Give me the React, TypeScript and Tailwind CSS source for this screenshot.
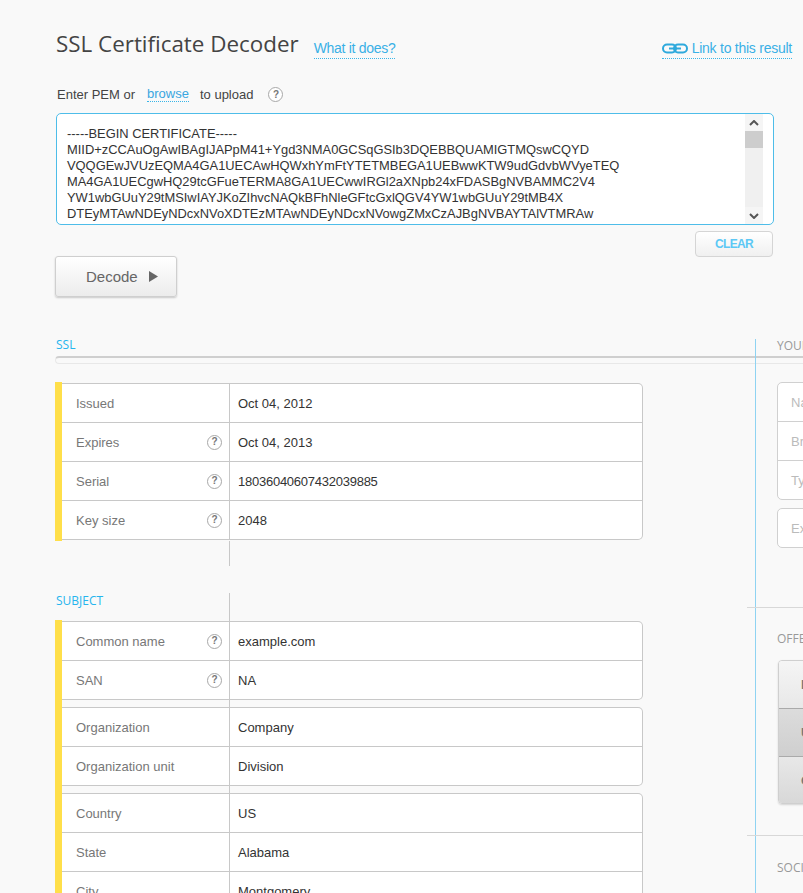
import React from "react";

const SANS = "font-['Liberation_Sans',Arial,sans-serif]";

function Help() {
  return (
    <span className="flex h-[15px] w-[15px] items-center justify-center rounded-full border border-[#a8a8a8] bg-white text-[10px] font-bold leading-none text-[#777]">
      ?
    </span>
  );
}

type Row = { label: string; value: string; help?: boolean; tight?: boolean };

function Group({ rows }: { rows: Row[] }) {
  return (
    <div className="w-[581px] rounded-r-[5px] border-y border-r border-[#c8c8c8] bg-white">
      {rows.map((r, i) => (
        <div key={r.label} className={i > 0 ? "flex h-[39px] border-t border-[#c8c8c8]" : "flex h-[38px]"}>
          <div className="flex w-[167px] items-center justify-between pl-[14px] pr-[7px] text-[#777]">
            <span>{r.label}</span>
            {r.help && <Help />}
          </div>
          <div className={"flex flex-1 items-center border-l border-[#c8c8c8] pl-[8px] text-[#333] " + (r.tight ? "tracking-[-0.25px]" : "")}>
            {r.value}
          </div>
        </div>
      ))}
    </div>
  );
}

function GroupGap() {
  return <div className="ml-[167px] h-[7px] border-l border-[#c8c8c8]" />;
}

function Stub({ h }: { h: string }) {
  return <div className={"ml-[174px] border-l border-[#c8c8c8] " + h} />;
}

function YellowBlock({ children }: { children: React.ReactNode }) {
  return (
    <div className="flex">
      <div className="w-[7px] shrink-0 bg-[#ffdf4a]" />
      <div className="py-px">{children}</div>
    </div>
  );
}

const pem = [
  "-----BEGIN CERTIFICATE-----",
  "MIID+zCCAuOgAwIBAgIJAPpM41+Ygd3NMA0GCSqGSIb3DQEBBQUAMIGTMQswCQYD",
  "VQQGEwJVUzEQMA4GA1UECAwHQWxhYmFtYTETMBEGA1UEBwwKTW9udGdvbWVyeTEQ",
  "MA4GA1UECgwHQ29tcGFueTERMA8GA1UECwwIRGl2aXNpb24xFDASBgNVBAMMC2V4",
  "YW1wbGUuY29tMSIwIAYJKoZIhvcNAQkBFhNleGFtcGxlQGV4YW1wbGUuY29tMB4X",
  "DTEyMTAwNDEyNDcxNVoXDTEzMTAwNDEyNDcxNVowgZMxCzAJBgNVBAYTAlVTMRAw",
];

export default function App() {
  return (
    <div className={"h-[893px] w-[803px] overflow-hidden bg-[#f9f9f9] text-[13px] leading-none " + SANS}>
      <header className="flex items-start pl-[56px] pr-[11px] pt-[29px]">
        <h1 className="font-['Open_Sans',sans-serif] text-[22.4px] font-medium leading-[30px] text-[#444]">
          SSL Certificate Decoder
        </h1>
        <a className="ml-[15px] mt-[12px] border-b border-dotted border-[#39b6e8] pb-[2px] text-[14px] leading-[15px] tracking-[-0.3px] text-[#39b0e6]">
          What it does?
        </a>
        <a className="ml-auto mt-[12px] flex items-center gap-[4px] border-b border-dotted border-[#39b6e8] pb-[2px] text-[14px] leading-[15px] tracking-[-0.25px] text-[#39b0e6]">
          <svg width="26" height="11" viewBox="0 0 26 11" fill="none" stroke="#2ea9dc" strokeWidth="2">
            <rect x="1" y="1.5" width="13" height="8" rx="4" />
            <rect x="12" y="1.5" width="13" height="8" rx="4" />
            <path d="M7 5.5h12" />
          </svg>
          Link to this result
        </a>
      </header>

      <div className="flex items-center pl-[57px] pt-[28px] text-[#444]">
        <span>Enter PEM or</span>
        <a className="ml-[12px] border-b border-dotted border-[#39b6e8] pb-px text-[#39a6e0]">browse</a>
        <span className="ml-[11px]">to upload</span>
        <span className="ml-[15px]">
          <Help />
        </span>
      </div>

      <div className="ml-[56px] mt-[11px] flex h-[112px] w-[718px] rounded-[5px] border border-[#4ebde9] bg-white">
        <div className="flex-1 overflow-hidden pl-[10px] pt-[12px] text-[12.9px] leading-[16px] text-[#333]">
          {pem.map((l) => (
            <div key={l} className="whitespace-nowrap">
              {l}
            </div>
          ))}
        </div>
        <div className="mr-[10px] flex w-[18px] flex-col bg-[#f0f0f0]">
          <div className="flex h-[17px] items-center justify-center bg-[#f5f5f5]">
            <svg width="10" height="6" viewBox="0 0 10 6" fill="none" stroke="#555" strokeWidth="2">
              <path d="M1 5l4-4 4 4" />
            </svg>
          </div>
          <div className="h-[17px] bg-[#cdcdcd]" />
          <div className="flex-1" />
          <div className="flex h-[17px] items-center justify-center bg-[#f5f5f5]">
            <svg width="10" height="6" viewBox="0 0 10 6" fill="none" stroke="#555" strokeWidth="2">
              <path d="M1 1l4 4 4-4" />
            </svg>
          </div>
        </div>
      </div>

      <div className="flex justify-end pr-[30px] pt-[6px]">
        <button className="h-[26px] w-[78px] rounded-[4px] border border-[#d5d5d5] bg-gradient-to-b from-white to-[#f0f0f0] text-[12px] font-bold tracking-[-0.7px] text-[#5cc8f5]">
          CLEAR
        </button>
      </div>

      <button className="ml-[55px] flex h-[41px] w-[122px] items-center rounded-[3px] border border-[#cfcfcf] bg-gradient-to-b from-white to-[#ececec] pl-[30px] text-[15px] text-[#666] shadow-[0_1px_2px_rgba(0,0,0,0.2)] [margin-top:-1px]">
        Decode
        <svg className="ml-[11px]" width="9" height="11" viewBox="0 0 9 11" fill="#666">
          <path d="M0 0l9 5.5L0 11z" />
        </svg>
      </button>

      <div className="mt-[41px] flex">
        <main className="w-[755px] shrink-0 pl-[55px]">
          <section>
            <div className="h-[14px] pl-px font-['Open_Sans',sans-serif] text-[12px] leading-[14px] text-[#26b5ee]">SSL</div>
            <div className="mt-[4px] h-[8px] rounded-l-[4px] border-b border-l border-t-2 border-[#e8e8e8] border-t-[#cfcfcf]" />
            <div className="h-[18px]" />
            <YellowBlock>
              <Group
                rows={[
                  { label: "Issued", value: "Oct 04, 2012" },
                  { label: "Expires", value: "Oct 04, 2013", help: true },
                  { label: "Serial", value: "18036040607432039885", help: true, tight: true },
                  { label: "Key size", value: "2048", help: true },
                ]}
              />
            </YellowBlock>
            <Stub h="h-[25px]" />
          </section>

          <section className="relative mt-[27px]">
            <div className="h-[27px] pl-px pt-px font-['Open_Sans',sans-serif] text-[12px] leading-[14px] text-[#26b5ee]">SUBJECT</div>
            <div className="absolute left-[174px] top-0 h-[28px] border-l border-[#c8c8c8]" />
            <YellowBlock>
              <Group
                rows={[
                  { label: "Common name", value: "example.com", help: true },
                  { label: "SAN", value: "NA", help: true },
                ]}
              />
              <GroupGap />
              <Group
                rows={[
                  { label: "Organization", value: "Company" },
                  { label: "Organization unit", value: "Division" },
                ]}
              />
              <GroupGap />
              <Group
                rows={[
                  { label: "Country", value: "US" },
                  { label: "State", value: "Alabama" },
                  { label: "City", value: "Montgomery" },
                ]}
              />
            </YellowBlock>
          </section>
        </main>

        <aside className="mt-px min-w-0 flex-1 border-l border-[#8fd3f2]">
          <div className="h-[13px] whitespace-nowrap pl-[21px] font-['Open_Sans',sans-serif] text-[12px] leading-[13px] text-[#999]">YOUR</div>
          <div className="mt-[4px] h-[8px] border-b border-t-2 border-[#e8e8e8] border-t-[#cfcfcf]" />
          <div className="h-[18px]" />
          <div className="ml-[21px] w-[200px] rounded-[5px] border border-[#d0d0d0] bg-white text-[#bbb]">
            {["Name", "Brand", "Type"].map((l, i) => (
              <div key={l} className={i ? "flex h-[39px] items-center border-t border-[#d0d0d0] pl-[13px]" : "flex h-[38px] items-center pl-[13px]"}>
                {l}
              </div>
            ))}
          </div>
          <div className="ml-[21px] mt-[8px] flex h-[40px] w-[200px] items-center rounded-[5px] border border-[#d0d0d0] bg-white pl-[13px] text-[#bbb]">
            Expires
          </div>
          <div className="ml-[-9px] mt-[59px] border-t border-[#d8d8d8]" />
          <div className="whitespace-nowrap pl-[21px] pt-[24px] font-['Open_Sans',sans-serif] text-[12px] leading-[14px] text-[#999]">OFFERS</div>
          <div className="ml-[22px] mt-[14px] w-[200px] overflow-hidden rounded-[4px] border border-[#cfcfcf] text-[13px] font-bold text-[#777] shadow-[0_1px_2px_rgba(0,0,0,0.15)]">
            <div className="flex h-[47px] items-center bg-gradient-to-b from-[#f5f5f5] to-[#e8e8e8] pl-[22px]">PEM</div>
            <div className="flex h-[48px] items-center border-t border-[#aaa] bg-gradient-to-b from-[#dcdcdc] to-[#cfcfcf] pl-[22px]">URL</div>
            <div className="flex h-[47px] items-center border-t border-[#aaa] bg-gradient-to-b from-[#e8e8e8] to-[#d8d8d8] pl-[22px]">CSR</div>
          </div>
          <div className="ml-[-9px] mt-[31px] border-t border-[#d8d8d8]" />
          <div className="whitespace-nowrap pl-[21px] pt-[25px] font-['Open_Sans',sans-serif] text-[12px] leading-[14px] text-[#999]">SOCIAL</div>
        </aside>
      </div>
    </div>
  );
}
